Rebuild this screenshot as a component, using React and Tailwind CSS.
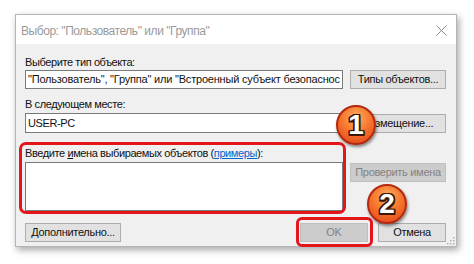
import React from "react";

const font = { fontFamily: '"Liberation Sans", Arial, sans-serif' };

function Btn({ children, className = "", disabled = false }) {
  return (
    <div
      className={
        "flex items-center justify-center h-[19px] border text-[11px] tracking-[-0.3px] leading-none whitespace-nowrap " +
        (disabled
          ? "bg-[#cccccc] border-[#bfbfbf] text-[#838383] "
          : "bg-[#e1e1e1] border-[#adadad] text-[#111] ") +
        className
      }
    >
      {children}
    </div>
  );
}

function Badge({ n, className = "" }) {
  return (
    <div
      className={
        "absolute w-[40px] h-[40px] rounded-full border-[2px] border-[#b3280e] bg-[radial-gradient(circle_at_50%_30%,#ffb060_0%,#f6782f_45%,#de3f17_100%)] shadow-[1px_2px_3px_rgba(0,0,0,0.45)] flex items-center justify-center " +
        className
      }
    >
      <span
        className="text-white font-bold text-[28px] leading-none [text-shadow:-1.5px_-1.5px_0_#3b1607,1.5px_-1.5px_0_#3b1607,-1.5px_1.5px_0_#3b1607,1.5px_1.5px_0_#3b1607,0_1.5px_0_#3b1607,0_-1.5px_0_#3b1607,1.5px_0_0_#3b1607,-1.5px_0_0_#3b1607]"
        style={{ fontFamily: '"Liberation Sans", Arial, sans-serif' }}
      >
        {n}
      </span>
    </div>
  );
}

export default function App() {
  return (
    <div className="w-[474px] h-[264px] bg-white overflow-hidden pt-[14px] pl-[15px]" style={font}>
      <div className="relative w-[442px] h-[233px] flex flex-col border border-[#b5b5b5] shadow-[2px_3px_7px_rgba(0,0,0,0.35)]">
        {/* title bar */}
        <div className="h-[29px] bg-white flex items-center justify-between pl-[5px] pr-[9px] shrink-0">
          <span className="text-[12px] tracking-[-0.45px] text-[#9a9a9a] pt-[2px]">Выбор: "Пользователь" или "Группа"</span>
          <svg width="11" height="11" viewBox="0 0 11 11" className="mt-[1px]">
            <path d="M0.5 0.5 L10.5 10.5 M10.5 0.5 L0.5 10.5" stroke="#8c8c8c" strokeWidth="1" fill="none" />
          </svg>
        </div>
        {/* body */}
        <div className="flex-1 bg-[#f0f0f0] pl-[9px] pr-[10px] pt-[11px] flex flex-col text-[11px] tracking-[-0.4px] text-[#111]">
          <div className="leading-[14px]">Выберите тип объекта:</div>
          <div className="flex items-center gap-[7px] mt-[1px]">
            <div className="w-[318px] h-[19px] bg-white border border-[#7a7a7a] px-[2px] flex items-center whitespace-nowrap overflow-hidden leading-none tracking-[-0.2px]">
              "Пользователь", "Группа" или "Встроенный субъект безопаснос
            </div>
            <Btn className="w-[96px]">Типы объектов...</Btn>
          </div>
          <div className="leading-[14px] mt-[8px]">В следующем месте:</div>
          <div className="flex items-center gap-[7px] mt-[2px]">
            <div className="w-[318px] h-[20px] bg-white border border-[#7a7a7a] px-[2px] flex items-center leading-none">
              USER-PC
            </div>
            <Btn className="w-[96px]">Размещение...</Btn>
          </div>
          <div className="flex gap-[7px] mt-[13px]">
            <div className="w-[318px] flex flex-col">
              <div className="leading-[14px] whitespace-nowrap">
                Введите <span className="underline">и</span>мена выбираемых объектов (<span className="text-[#0066cc] underline">примеры</span>):
              </div>
              <div className="h-[49px] mt-[2px] bg-white border border-[#7a7a7a]"></div>
            </div>
            <div className="mt-[17px]">
              <Btn className="w-[96px]" disabled>
                Проверить имена
              </Btn>
            </div>
          </div>
          <div className="flex items-center mt-[12px]">
            <Btn className="w-[96px]">Дополнительно...</Btn>
            <div className="flex-1"></div>
            <Btn className="w-[68px]" disabled>
              OK
            </Btn>
            <Btn className="w-[68px] ml-[10px]">Отмена</Btn>
          </div>
        </div>

        {/* resize grip */}
        <svg width="8" height="8" viewBox="0 0 8 8" className="absolute right-[1px] bottom-[1px]">
          <rect x="6" y="0" width="1.5" height="1.5" fill="#b0b0b0" />
          <rect x="3" y="3" width="1.5" height="1.5" fill="#b0b0b0" />
          <rect x="6" y="3" width="1.5" height="1.5" fill="#b0b0b0" />
          <rect x="0" y="6" width="1.5" height="1.5" fill="#b0b0b0" />
          <rect x="3" y="6" width="1.5" height="1.5" fill="#b0b0b0" />
          <rect x="6" y="6" width="1.5" height="1.5" fill="#b0b0b0" />
        </svg>

        {/* annotations */}
        <div className="absolute left-[3px] top-[127px] w-[327px] h-[72px] border-[3px] border-[#e3161c] rounded-[7px]"></div>
        <div className="absolute left-[280px] top-[202px] w-[77px] h-[30px] border-[3px] border-[#e3161c] rounded-[6px]"></div>
        <Badge n="1" className="left-[320px] top-[90px]" />
        <Badge n="2" className="left-[351px] top-[169px]" />
      </div>
    </div>
  );
}
